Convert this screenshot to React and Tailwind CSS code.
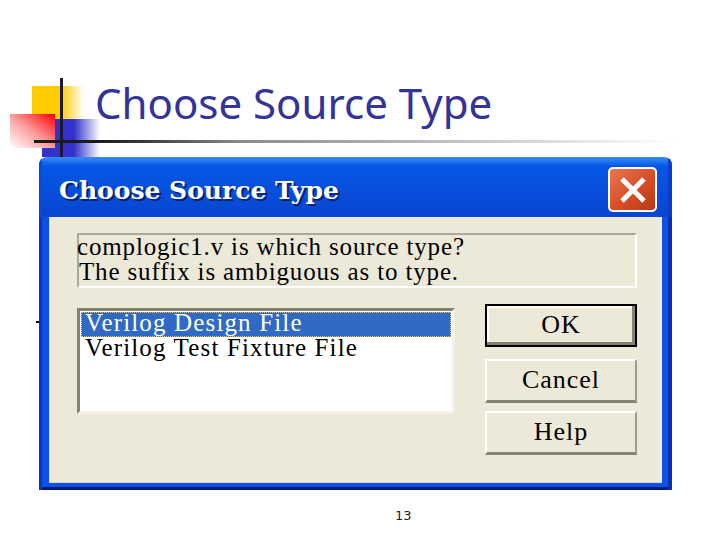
const serif = { fontFamily: '"Liberation Serif", serif' };

const Logo = () => (
    <svg className="absolute left-0 top-0" width="100" height="160" viewBox="0 0 100 160">
        <defs>
            <linearGradient id="yellowFade" x1="0" x2="1" y1="0" y2="0">
                <stop offset="0" stopColor="#ffcc00" />
                <stop offset="0.55" stopColor="#ffcc00" />
                <stop offset="1" stopColor="#ffffff" />
            </linearGradient>
            <linearGradient id="blueFade" x1="0" x2="1" y1="0" y2="0">
                <stop offset="0" stopColor="#3333cc" />
                <stop offset="0.55" stopColor="#3333cc" />
                <stop offset="1" stopColor="#ffffff" />
            </linearGradient>
            <linearGradient id="redFade" x1="1" x2="0" y1="0" y2="1">
                <stop offset="0" stopColor="#ff0000" />
                <stop offset="0.5" stopColor="#fb9a9a" />
                <stop offset="1" stopColor="#ffffff" />
            </linearGradient>
        </defs>
        <rect x="32" y="86" width="52" height="34" fill="url(#yellowFade)" />
        <rect x="42" y="119" width="58" height="38" fill="url(#blueFade)" />
        <rect x="10" y="114" width="45" height="34" fill="url(#redFade)" />
        <rect x="60" y="78" width="3" height="80" fill="#1a1a2a" />
    </svg>
);

const WinButton = ({ label, isDefault }) => (
    <button
        className={`w-[152px] flex items-center justify-center bg-[#ece9d8] text-[26px] tracking-[1px] text-black pb-[3px] ${
            isDefault
                ? 'h-[43px] border-2 border-black shadow-[inset_-3px_-3px_0_#85826f,inset_2px_2px_0_#fffff8]'
                : 'h-[44px] border-t-2 border-l-2 border-b-3 border-r-2 border-t-white border-l-white border-b-[#85826f] border-r-[#a09c88]'
        }`}
        style={serif}
    >
        {label}
    </button>
);

const App = () => {
    return (
        <div className="relative w-[720px] h-[540px] bg-white overflow-hidden flex flex-col">
            <Logo />
            <div className="relative h-[62px] mt-[78px] pl-[95px] pb-[13px] flex items-center">
                <h1 className="text-[42px] leading-none font-normal text-[#333399]" style={{ fontFamily: '"Noto Sans", sans-serif' }}>
                    Choose Source Type
                </h1>
            </div>
            <div className="relative ml-[34px] w-[640px] h-[3px] bg-gradient-to-r from-[#1a1a1a] from-10% via-[#8a8a8a] via-32% to-[#ffffff]" />

            <div className="relative mt-[14px] ml-[39px] w-[633px] h-[333px] flex flex-col rounded-t-[8px] overflow-hidden">
                <div className="h-[60px] px-[20px] flex items-center justify-between bg-gradient-to-b from-[#3a8cf5] via-[#0457e6] via-15% to-[#0a45d0] shadow-[inset_-4px_0_0_#0a3ccc,inset_3px_0_0_#0a4ad8]">
                    <span
                        className="text-[25px] font-bold text-white mt-[7px] [text-shadow:2px_2px_0_#08206e]"
                        style={{ fontFamily: '"DejaVu Serif", serif' }}
                    >
                        Choose Source Type
                    </span>
                    <div className="w-[49px] h-[45px] mr-[-5px] mt-[5px] flex items-center justify-center rounded-[5px] border-2 border-white bg-gradient-to-br from-[#e8784f] via-[#d8502a] to-[#b83a14]">
                        <svg width="30" height="30" viewBox="0 0 30 30">
                            <path d="M4 4 L26 26 M26 4 L4 26" stroke="#ffffff" strokeWidth="5" />
                        </svg>
                    </div>
                </div>

                <div className="flex-1 flex px-[10px] pb-[7px] bg-[#0c50e4] shadow-[inset_3px_0_0_#0a36c4,inset_-4px_0_0_#0a30b0,inset_0_-3px_0_#001a80]">
                    <div className="flex-1 bg-[#ece9d8] border-l border-b border-[#d0d8ee] pt-[16px] pl-[27px]">
                        <div
                            className="w-[560px] h-[55px] pb-[4px] border-2 border-t-[#aca899] border-l-[#aca899] border-r-white border-b-white flex flex-col justify-center text-[25px] leading-[25px] text-black tracking-[0.85px] whitespace-nowrap"
                            style={serif}
                        >
                            <div className="-ml-[2px]">complogic1.v is which source type?</div>
                            <div>The suffix is ambiguous as to type.</div>
                        </div>

                        <div className="flex mt-[16px]">
                            <div
                                className="w-[378px] h-[106px] mt-[4px] bg-white border-[3px] border-t-[#85826f] border-l-[#85826f] border-r-[#f4f2e8] border-b-[#f4f2e8] p-[1px] text-[25px] leading-[24px] tracking-[1.15px] text-black"
                                style={serif}
                            >
                                <div className="h-[25px] pb-[3px] bg-[#316ac5] text-white border border-dotted border-[#d0c890] pl-[3px] flex items-center">
                                    Verilog Design File
                                </div>
                                <div className="pl-[4px] -mt-[1px]">Verilog Test Fixture File</div>
                            </div>
                            <div className="ml-[30px] flex flex-col">
                                <WinButton label="OK" isDefault />
                                <div className="h-[12px]" />
                                <WinButton label="Cancel" />
                                <div className="h-[8px]" />
                                <WinButton label="Help" />
                            </div>
                        </div>
                    </div>
                </div>
            </div>

            <div className="absolute left-[36px] top-[321px] w-[3px] h-[2px] bg-black" />

            <div className="relative mt-[18px] pl-[395px] text-[13px] leading-[16px] text-[#222222]" style={{ fontFamily: '"DejaVu Sans", sans-serif' }}>
                13
            </div>
        </div>
    );
};

export default App;
